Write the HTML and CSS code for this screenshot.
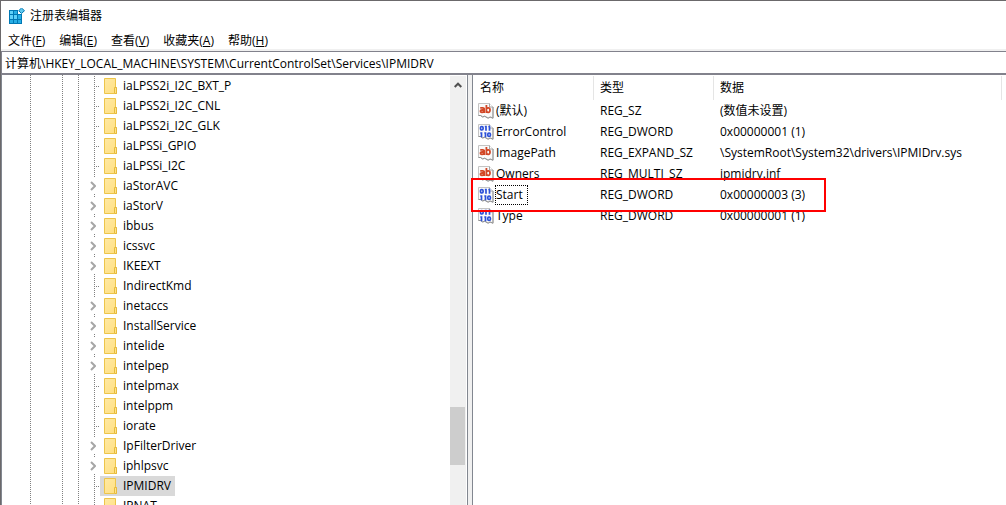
FILE: index.html
```html
<!DOCTYPE html>
<html lang="zh-CN">
<head>
<meta charset="utf-8">
<title>注册表编辑器</title>
<link rel="stylesheet" href="styles.css">
</head>
<body>
<svg class="defs" width="0" height="0" aria-hidden="true">
  <defs>
    <linearGradient id="fold" x1="0" y1="0" x2="1" y2="1"><stop offset="0" stop-color="#ffe9a3"/><stop offset="1" stop-color="#ffdf80"/></linearGradient>
  </defs>
  <symbol id="folder" viewBox="0 0 14 16">
    <path d="M.5.5h11v9h1v6H.5z" fill="url(#fold)" stroke="#edc54a"/>
    <path d="M10.500 15V9.500h2v6h-2" fill="#ffe28c" stroke="#e6bb3c"/>
  </symbol>
  <symbol id="page" viewBox="0 0 16 16">
    <path d="M.5.5h11l3.500 3.500v11l-2.500-1-2 1.200-3.500-2-2 .8-2-1.500H.5z" fill="#fafafa" stroke="#c4c4c4"/>
    <path d="M15 4v11.300l-3-1.300-2 1.200-3.500-2-2 .8-2-1.500H.5" fill="none" stroke="#909090"/>
    <path d="M11.500.5V4H15" fill="#fff" stroke="#a6a6a6"/>
  </symbol>
  <symbol id="string" viewBox="0 0 16 16">
    <use href="#page"/>
    <g fill="none" stroke="#d24726" stroke-width="1.800">
      <path d="M2.200 4.900h2.500q1.500 0 1.500 1.400V10M6 7H4Q2.500 7 2.500 8.200T4 9.300q1.200 0 2-.9"/>
      <path d="M8.400 2v8M8.400 5.900q.8-1 1.900-1 1.700 0 1.700 2.200T10.300 9.300q-1.200 0-1.900-.9"/>
    </g>
  </symbol>
  <symbol id="binary" viewBox="0 0 16 16">
    <use href="#page"/>
    <g fill="none" stroke="#2b50d8" stroke-width="1.700">
      <rect x="2.500" y="2.500" width="2.600" height="3.500" rx="1.200"/><path d="M8 1.700v5.100M11.500 1.700v5.100M6.800 2.500H8M10.300 2.500h1.200"/>
      <path d="M3.500 8.200v5.100M7.500 8.200v5.100M2.300 9h1.200M6.300 9h1.200"/><rect x="9.800" y="9" width="2.600" height="3.500" rx="1.200"/>
    </g>
  </symbol>
  <symbol id="chevron" viewBox="0 0 6 10"><path d="M1 1l4 4-4 4" fill="none" stroke="#a6a6a6" stroke-width="2"/></symbol>
</svg>

<div class="window">
  <header class="titlebar">
    <svg class="app-icon" viewBox="0 0 16 16" aria-hidden="true">
      <path d="M0 2h9v4h4v10H0z" fill="#0078b4"/>
      <path d="M1 3h3v3H1zM1 7h3v4H1zM5 7h3v4H5z" fill="#5fd0f8"/>
      <path d="M5 3h3v3H5zM9 7h3v4H9zM1 12h3v3H1zM5 12h3v3H5zM9 12h3v3H9z" fill="#27aee5"/>
      <path d="M12.500 0L15.500 2.700 12.500 5.500 9.700 2.700z" fill="#5fc8ee" stroke="#0078b4"/>
    </svg>
    <h1 class="title">注册表编辑器</h1>
  </header>
  <nav class="menubar">
    <button class="menu" type="button">文件(<u>F</u>)</button>
    <button class="menu" type="button">编辑(<u>E</u>)</button>
    <button class="menu" type="button">查看(<u>V</u>)</button>
    <button class="menu" type="button">收藏夹(<u>A</u>)</button>
    <button class="menu" type="button">帮助(<u>H</u>)</button>
  </nav>
  <input class="address" type="text" aria-label="地址" spellcheck="false" value="计算机\HKEY_LOCAL_MACHINE\SYSTEM\CurrentControlSet\Services\IPMIDRV">
  <main class="panes">
    <section class="tree-pane">
      <ul class="tree">
        <li class="node"><i class="stub"></i><span class="key"><svg class="folder"><use href="#folder"/></svg>iaLPSS2i_I2C_BXT_P</span></li>
        <li class="node"><i class="stub"></i><span class="key"><svg class="folder"><use href="#folder"/></svg>iaLPSS2i_I2C_CNL</span></li>
        <li class="node"><i class="stub"></i><span class="key"><svg class="folder"><use href="#folder"/></svg>iaLPSS2i_I2C_GLK</span></li>
        <li class="node"><i class="stub"></i><span class="key"><svg class="folder"><use href="#folder"/></svg>iaLPSSi_GPIO</span></li>
        <li class="node"><i class="stub"></i><span class="key"><svg class="folder"><use href="#folder"/></svg>iaLPSSi_I2C</span></li>
        <li class="node"><button class="expand" type="button" aria-label="展开 iaStorAVC"><svg class="chevron"><use href="#chevron"/></svg></button><span class="key"><svg class="folder"><use href="#folder"/></svg>iaStorAVC</span></li>
        <li class="node"><button class="expand" type="button" aria-label="展开 iaStorV"><svg class="chevron"><use href="#chevron"/></svg></button><span class="key"><svg class="folder"><use href="#folder"/></svg>iaStorV</span></li>
        <li class="node"><button class="expand" type="button" aria-label="展开 ibbus"><svg class="chevron"><use href="#chevron"/></svg></button><span class="key"><svg class="folder"><use href="#folder"/></svg>ibbus</span></li>
        <li class="node"><button class="expand" type="button" aria-label="展开 icssvc"><svg class="chevron"><use href="#chevron"/></svg></button><span class="key"><svg class="folder"><use href="#folder"/></svg>icssvc</span></li>
        <li class="node"><button class="expand" type="button" aria-label="展开 IKEEXT"><svg class="chevron"><use href="#chevron"/></svg></button><span class="key"><svg class="folder"><use href="#folder"/></svg>IKEEXT</span></li>
        <li class="node"><i class="stub"></i><span class="key"><svg class="folder"><use href="#folder"/></svg>IndirectKmd</span></li>
        <li class="node"><button class="expand" type="button" aria-label="展开 inetaccs"><svg class="chevron"><use href="#chevron"/></svg></button><span class="key"><svg class="folder"><use href="#folder"/></svg>inetaccs</span></li>
        <li class="node"><button class="expand" type="button" aria-label="展开 InstallService"><svg class="chevron"><use href="#chevron"/></svg></button><span class="key"><svg class="folder"><use href="#folder"/></svg>InstallService</span></li>
        <li class="node"><button class="expand" type="button" aria-label="展开 intelide"><svg class="chevron"><use href="#chevron"/></svg></button><span class="key"><svg class="folder"><use href="#folder"/></svg>intelide</span></li>
        <li class="node"><button class="expand" type="button" aria-label="展开 intelpep"><svg class="chevron"><use href="#chevron"/></svg></button><span class="key"><svg class="folder"><use href="#folder"/></svg>intelpep</span></li>
        <li class="node"><i class="stub"></i><span class="key"><svg class="folder"><use href="#folder"/></svg>intelpmax</span></li>
        <li class="node"><i class="stub"></i><span class="key"><svg class="folder"><use href="#folder"/></svg>intelppm</span></li>
        <li class="node"><i class="stub"></i><span class="key"><svg class="folder"><use href="#folder"/></svg>iorate</span></li>
        <li class="node"><button class="expand" type="button" aria-label="展开 IpFilterDriver"><svg class="chevron"><use href="#chevron"/></svg></button><span class="key"><svg class="folder"><use href="#folder"/></svg>IpFilterDriver</span></li>
        <li class="node"><button class="expand" type="button" aria-label="展开 iphlpsvc"><svg class="chevron"><use href="#chevron"/></svg></button><span class="key"><svg class="folder"><use href="#folder"/></svg>iphlpsvc</span></li>
        <li class="node"><i class="stub"></i><span class="key selected"><svg class="folder"><use href="#folder"/></svg>IPMIDRV</span></li>
        <li class="node"><i class="stub"></i><span class="key"><svg class="folder"><use href="#folder"/></svg>IPNAT</span></li>
      </ul>
      <div class="scrollbar">
        <button class="scroll-up" type="button" aria-label="向上滚动"><svg class="arrow" viewBox="0 0 8 6"><path d="M.7 5L4 1.700 7.300 5" fill="none" stroke="#505050" stroke-width="2"/></svg></button>
        <div class="track-above"></div>
        <div class="thumb"></div>
        <div class="track-below"></div>
      </div>
    </section>
    <div class="splitter"></div>
    <section class="values-pane">
      <table class="values">
        <colgroup><col class="col-name"><col class="col-type"><col class="col-data"><col></colgroup>
        <thead><tr><th>名称</th><th>类型</th><th>数据</th><td></td></tr></thead>
        <tbody>
          <tr><td><span class="value"><svg class="kind"><use href="#string"/></svg><span class="name">(默认)</span></span></td><td>REG_SZ</td><td>(数值未设置)</td><td></td></tr>
          <tr><td><span class="value"><svg class="kind"><use href="#binary"/></svg><span class="name">ErrorControl</span></span></td><td>REG_DWORD</td><td>0x00000001 (1)</td><td></td></tr>
          <tr><td><span class="value"><svg class="kind"><use href="#string"/></svg><span class="name">ImagePath</span></span></td><td>REG_EXPAND_SZ</td><td>\SystemRoot\System32\drivers\IPMIDrv.sys</td><td></td></tr>
          <tr><td><span class="value"><svg class="kind"><use href="#string"/></svg><span class="name">Owners</span></span></td><td>REG_MULTI_SZ</td><td>ipmidrv.inf</td><td></td></tr>
          <tr><td><span class="value"><svg class="kind"><use href="#binary"/></svg><span class="name focused">Start</span></span></td><td>REG_DWORD</td><td>0x00000003 (3)</td><td></td></tr>
          <tr><td><span class="value"><svg class="kind"><use href="#binary"/></svg><span class="name">Type</span></span></td><td>REG_DWORD</td><td>0x00000001 (1)</td><td></td></tr>
        </tbody>
      </table>
      <div class="highlight"></div>
    </section>
  </main>
</div>
</body>
</html>
```
FILE: styles.css
```css
* { box-sizing: border-box; }

body {
  margin: 0;
  background: #fff;
  color: #000;
  font: 12px/20px "Open Sans", "Noto Sans CJK SC", sans-serif;
}

button, input { font: inherit; color: inherit; }

.defs { position: absolute; }

.window {
  display: flex;
  flex-direction: column;
  height: 100vh;
  overflow: hidden;
  border-top: 1px solid #6b696b;
  border-left: 1px solid #6b696b;
}

.titlebar {
  display: flex;
  align-items: center;
  gap: 5px;
  height: 29px;
  padding-left: 8px;
  flex: none;
}

.app-icon { width: 16px; height: 16px; }

.title { margin: 0; font-size: 12px; font-weight: 400; }

.menubar {
  display: flex;
  flex: none;
  height: 21px;
  border-bottom: 2px solid #f0f0f0;
}

.menu {
  padding: 1px 7px 0;
  border: 0;
  background: none;
  line-height: 20px;
}

.address {
  flex: none;
  width: 100%;
  height: 24px;
  padding: 0 3px;
  border: solid #82828c;
  border-width: 1px 0 2px 1px;
  background: #fff;
  outline: 0;
}

.panes { display: flex; flex: 1; min-height: 0; }

.tree-pane {
  display: flex;
  flex: none;
  width: 467px;
  border-right: 1px solid #828790;
  border-left: 1px solid #828790;
  padding-right: 1px;
  overflow: hidden;
}

.tree {
  flex: 1;
  min-width: 0;
  margin: 0;
  padding: 1px 0 0 84px;
  list-style: none;
  background-image:
    repeating-linear-gradient(#808080 0 1px, transparent 1px 2px),
    repeating-linear-gradient(#808080 0 1px, transparent 1px 2px),
    repeating-linear-gradient(#808080 0 1px, transparent 1px 2px);
  background-size: 1px 100%;
  background-position: 28px 0, 60px 0, 76px 0;
  background-repeat: no-repeat;
}

.node {
  display: flex;
  align-items: center;
  height: 20px;
  background: repeating-linear-gradient(#808080 0 1px, transparent 1px 2px) 8px 0 / 1px 100% no-repeat;
}

.stub {
  width: 6px;
  height: 1px;
  margin-left: 8px;
  background: repeating-linear-gradient(90deg, #808080 0 1px, transparent 1px 2px);
}

.expand {
  display: flex;
  align-items: center;
  justify-content: center;
  width: 14px;
  height: 16px;
  padding: 0;
  border: 0;
  background: #fff;
}

.chevron { width: 6px; height: 10px; }

.key {
  display: flex;
  align-items: center;
  gap: 5px;
  height: 20px;
  padding: 0 4px;
  white-space: nowrap;
}

.selected { background: #d9d9d9; }

.folder { width: 14px; height: 16px; }

.scrollbar {
  display: flex;
  flex-direction: column;
  flex: none;
  width: 16px;
  margin-top: 1px;
  background: #f0f0f0;
}

.scroll-up {
  display: flex;
  align-items: center;
  justify-content: center;
  height: 17px;
  padding: 0;
  border: 0;
  background: none;
}

.arrow { width: 8px; height: 6px; }

.track-above { flex: 314; }
.thumb { flex: 58; width: 15px; background: #cdcdcd; }
.track-below { flex: 40; }

.splitter { flex: none; width: 4px; background: #f0f0f0; }

.values-pane {
  position: relative;
  flex: 1;
  min-width: 0;
  border-left: 1px solid #828790;
}

.values {
  width: 100%;
  margin-top: 1px;
  border-spacing: 0;
  table-layout: fixed;
  white-space: nowrap;
}

.col-name { width: 121px; }
.col-type { width: 120px; }
.col-data { width: 288px; }

.values th {
  height: 24px;
  padding: 0 6px;
  border-right: 1px solid #e5e5e5;
  font-weight: 400;
  text-align: left;
}

.values th:first-child { padding-left: 7px; }

.values td { height: 21px; padding: 0 6px; line-height: 20px; }

.values td:first-child { padding-left: 5px; }

.value { display: flex; align-items: center; gap: 1px; }

.kind { flex: none; width: 16px; height: 16px; }

.name { padding: 0 1px; }

.focused { padding: 0 4px 0 0; border: 1px dotted #000; line-height: 18px; }

/* Callout around the Start value */
.highlight {
  position: absolute;
  top: 103px;
  left: -2px;
  width: 355px;
  height: 34px;
  border: 2px solid #f00;
}
```
